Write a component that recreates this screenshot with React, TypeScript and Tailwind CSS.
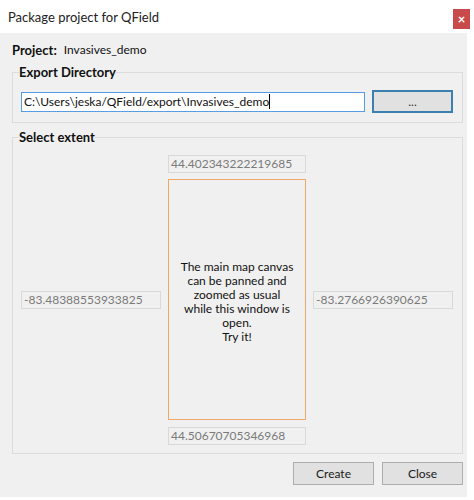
import React from 'react';

const FONT = 'Lato, "Noto Sans", sans-serif';

const CoordBox: React.FC<{ value: string }> = ({ value }) => (
  <div className="h-[18px] border border-[#d9d9d9] bg-[#f0f0f0] px-[2px] text-[12px] leading-[16px] text-[#7a7a7a] whitespace-nowrap overflow-hidden">
    {value}
  </div>
);

const DialogButton: React.FC<{ label: string }> = ({ label }) => (
  <button className="w-[81px] h-[23px] border border-[#adadad] bg-[#e1e1e1] text-[12px] leading-[16px] text-[#1a1a1a]">
    {label}
  </button>
);

export default function App() {
  return (
    <div className="w-[474px] h-[500px] bg-white text-[#111]" style={{ fontFamily: FONT }}>
      <div className="h-[33px] flex items-start justify-between pl-[8px]">
        <span className="mt-[8px] text-[13px] leading-[18px] text-[#222]">Package project for QField</span>
        <div className="mt-[9px] mr-[4px] w-[17px] h-[20px] bg-[#c94a4a] flex items-center justify-center text-white text-[13px] font-bold leading-none">
          ×
        </div>
      </div>

      <div className="w-[467px] h-[464px] bg-[#f0f0f0] pt-[9px] pl-[12px] pr-[4px]">
        <div className="h-[16px] flex items-center gap-[7px] leading-[16px]">
          <span className="font-bold text-[13px]">Project:</span>
          <span className="text-[12px]">Invasives_demo</span>
        </div>

        <fieldset className="mt-[6px] border border-[#dcdcdc] px-[8px] pt-[10px] pb-[9px]">
          <legend className="-ml-[2px] text-[13px] leading-[16px] font-bold">Export Directory</legend>
          <div className="flex items-center gap-[7px]">
            <div className="w-[344px] h-[20px] border border-[#569de5] bg-white px-[2px] text-[12px] leading-[18px] whitespace-nowrap">
              C:\Users\jeska/QField/export\Invasives_demo<span className="border-l border-black" />
            </div>
            <button className="w-[81px] h-[23px] border-2 border-[#3c7fb1] bg-[#e1e1e1] text-[12px] leading-none text-[#333]">
              ...
            </button>
          </div>
        </fieldset>

        <fieldset className="mt-[6px] border border-[#dcdcdc] pl-[8px] pr-[9px] pt-[10px] pb-[8px]">
          <legend className="-ml-[2px] text-[13px] leading-[16px] font-bold">Select extent</legend>
          <div className="grid grid-cols-[140px_138px_140px] grid-rows-[18px_241px_19px] gap-x-[7px] gap-y-[6px] items-center">
            <div />
            <CoordBox value="44.402343222219685" />
            <div />
            <CoordBox value="-83.48388553933825" />
            <div className="h-[241px] border border-[#f0a868] pt-[4px] flex items-center justify-center text-center text-[12px] leading-[14px] text-[#111]">
              <p>
                The main map canvas
                <br />
                can be panned and
                <br />
                zoomed as usual
                <br />
                while this window is
                <br />
                open.
                <br />
                Try it!
              </p>
            </div>
            <CoordBox value="-83.2766926390625" />
            <div />
            <CoordBox value="44.50670705346968" />
            <div />
          </div>
        </fieldset>

        <div className="mt-[8px] flex justify-end gap-[8px]">
          <DialogButton label="Create" />
          <DialogButton label="Close" />
        </div>
      </div>
    </div>
  );
}
